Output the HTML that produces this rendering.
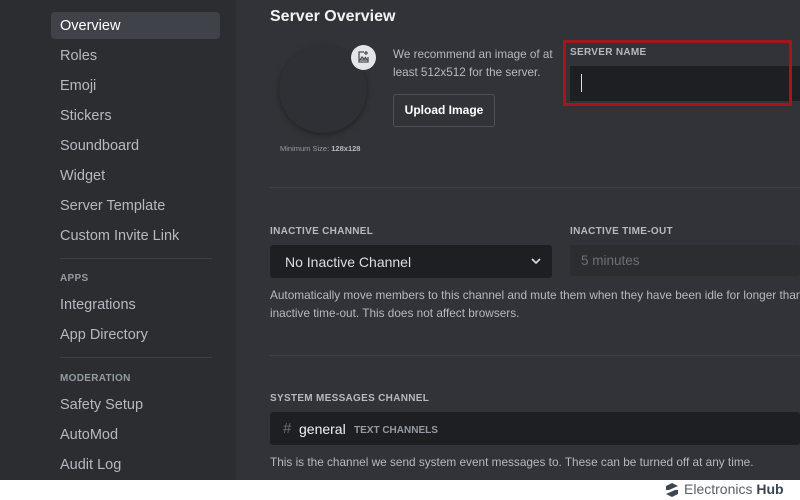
<!DOCTYPE html>
<html><head><meta charset="utf-8"><style>
*{margin:0;padding:0;box-sizing:border-box}
body{width:800px;height:500px;overflow:hidden;background:#fff;font-family:"Liberation Sans",sans-serif;position:relative}
.a{position:absolute;white-space:nowrap}
#side{left:0;top:0;width:236px;height:480px;background:#2b2d31}
#main{left:236px;top:0;width:564px;height:480px;background:#313338}
.it{left:60px;font-size:14.5px;color:#b5bac1}
.hd{left:60px;font-size:10px;font-weight:bold;color:#949ba4;letter-spacing:.3px}
.lbl{font-size:10px;font-weight:bold;color:#b5bac1;letter-spacing:.3px}
.dv{height:1px;background:#3f4147}
.gray{color:#b5bac1}
</style></head><body>
<div class="a" id="side"></div>
<div class="a" id="main"></div>
<div class="a" style="left:51px;top:12px;width:169px;height:27px;background:#404249;border-radius:4px"></div>
<div class="a it" style="top:18px;color:#fff">Overview</div>
<div class="a it" style="top:48px">Roles</div>
<div class="a it" style="top:78px">Emoji</div>
<div class="a it" style="top:108px">Stickers</div>
<div class="a it" style="top:138px">Soundboard</div>
<div class="a it" style="top:168px">Widget</div>
<div class="a it" style="top:198px">Server Template</div>
<div class="a it" style="top:228px">Custom Invite Link</div>
<div class="a dv" style="left:60px;top:258px;width:152px"></div>
<div class="a hd" style="top:273px">APPS</div>
<div class="a it" style="top:297px">Integrations</div>
<div class="a it" style="top:327px">App Directory</div>
<div class="a dv" style="left:60px;top:357px;width:152px"></div>
<div class="a hd" style="top:373px">MODERATION</div>
<div class="a it" style="top:397px">Safety Setup</div>
<div class="a it" style="top:427px">AutoMod</div>
<div class="a it" style="top:457px">Audit Log</div>

<div class="a" style="left:270px;top:8px;font-size:16px;font-weight:bold;color:#f2f3f5">Server Overview</div>
<div class="a" style="left:279px;top:45px;width:88px;height:88px;border-radius:50%;background:#2e3035;box-shadow:0 2px 6px rgba(0,0,0,.35)"></div>
<div class="a" style="left:351px;top:45px;width:25px;height:25px;border-radius:50%;background:#e3e5e8"></div>
<svg class="a" style="left:356px;top:50px" width="15" height="15" viewBox="0 0 15 15"><path d="M8 2H3v10h9V7M10 1v4M8 3h4M4 10l2-3 2 2 1.5-1.5L11 10z" stroke="#4e5058" stroke-width="1.3" fill="none"/></svg>
<div class="a" style="left:280px;top:144px;font-size:7.5px;color:#949ba4">Minimum Size: <b style="color:#b5bac1">128x128</b></div>
<div class="a gray" style="left:393px;top:46px;font-size:11.7px;line-height:18px;white-space:normal;width:172px">We recommend an image of at least 512x512 for the server.</div>
<div class="a" style="left:393px;top:94px;width:102px;height:33px;border:1px solid #4e5058;border-radius:3px;color:#fff;font-size:12px;font-weight:bold;text-align:center;line-height:31px">Upload Image</div>
<div class="a lbl" style="left:570px;top:47px">SERVER NAME</div>
<div class="a" style="left:570px;top:66px;width:230px;height:35px;background:#1e1f22"></div>
<div class="a" style="left:581px;top:74px;width:1px;height:18px;background:#dbdee1"></div>
<div class="a" style="left:563px;top:40px;width:229px;height:66px;border:3px solid #a4161a"></div>
<div class="a dv" style="left:270px;top:187px;width:530px"></div>

<div class="a lbl" style="left:270px;top:226px">INACTIVE CHANNEL</div>
<div class="a" style="left:270px;top:245px;width:282px;height:33px;background:#1e1f22;border-radius:3px"></div>
<div class="a" style="left:285px;top:254px;font-size:14px;color:#dbdee1">No Inactive Channel</div>
<svg class="a" style="left:530px;top:256px" width="12" height="10" viewBox="0 0 12 10"><path d="M2 3l4 4 4-4" stroke="#dbdee1" stroke-width="1.6" fill="none"/></svg>
<div class="a lbl" style="left:570px;top:226px">INACTIVE TIME-OUT</div>
<div class="a" style="left:570px;top:245px;width:230px;height:31px;background:#2b2d31;border-radius:3px"></div>
<div class="a" style="left:581px;top:253px;font-size:13.5px;color:#6d6f78">5 minutes</div>
<div class="a gray" style="left:270px;top:286px;font-size:11.8px;line-height:18px">Automatically move members to this channel and mute them when they have been idle for longer than the<br>inactive time-out. This does not affect browsers.</div>
<div class="a dv" style="left:270px;top:355px;width:530px"></div>

<div class="a lbl" style="left:270px;top:393px">SYSTEM MESSAGES CHANNEL</div>
<div class="a" style="left:270px;top:412px;width:530px;height:33px;background:#1e1f22;border-radius:3px"></div>
<div class="a" style="left:283px;top:420px;font-size:15px;color:#6d6f78">#</div>
<div class="a" style="left:299px;top:421px;font-size:14px;color:#f2f3f5">general</div>
<div class="a" style="left:354px;top:425px;font-size:10px;font-weight:bold;color:#949ba4">TEXT CHANNELS</div>
<div class="a gray" style="left:270px;top:455px;font-size:11.8px">This is the channel we send system event messages to. These can be turned off at any time.</div>

<svg class="a" style="left:664px;top:482px" width="15" height="16" viewBox="0 0 15 16"><path d="M2 4l6-3 6 3-9 4h9v4l-6 3-6-3 9-4H2z" fill="#3c4650"/></svg>
<div class="a" style="left:684px;top:481px;font-size:14px;color:#5a6068">Electronics <b style="color:#3c4650">Hub</b></div>
</body></html>
